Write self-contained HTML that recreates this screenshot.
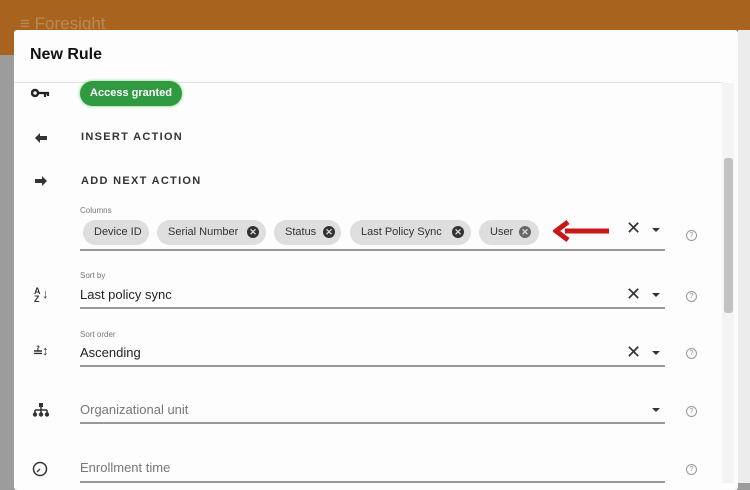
<!DOCTYPE html>
<html><head><style>
*{margin:0;padding:0;box-sizing:border-box}
body{width:750px;height:483px;overflow:hidden;position:relative;background:#9c9c9c;font-family:"Liberation Sans",sans-serif;color:#222}
.top{position:absolute;left:0;top:0;width:750px;height:55px;background:#a8641e}
.top span{position:absolute;left:20px;top:14px;color:#b88a5a;font-size:17px}
.rs{position:absolute;left:738px;top:30px;width:12px;height:453px;background:#ececec}
.dlg{position:absolute;left:14px;top:30px;width:724px;height:460px;background:#fdfdfd;border-radius:3px}
.hd{position:absolute;left:30px;top:46px;font-size:16px;font-weight:bold;color:#111}
.div{position:absolute;left:14px;top:82px;width:709px;height:1px;background:#e2e2e2}
.sb{position:absolute;left:722px;top:83px;width:12px;height:400px;background:#f4f4f4}
.th{position:absolute;left:724px;top:158px;width:9px;height:155px;background:#c2c2c2;border-radius:3px}
.a{position:absolute}
.pill{left:80px;top:81px;width:102px;height:25px;background:#2f9a40;border-radius:13px;color:#fff;font-size:11px;font-weight:bold;text-align:center;line-height:25px;box-shadow:0 0 3px #6c6}
.act{font-size:11px;font-weight:bold;letter-spacing:1.3px;color:#333;left:81px}
.lbl{font-size:8px;color:#777;left:80px}
.val{font-size:13px;color:#222;left:80px}
.ph{font-size:13px;color:#777;left:80px}
.ul{left:80px;width:585px;height:1.5px;background:#999}
.chip{top:220px;height:25px;background:#dedede;border-radius:13px;font-size:11px;color:#333;line-height:25px;padding-left:11px}
.cx{position:absolute;top:6px;width:12px;height:12px;border-radius:50%;background:#333;color:#dedede;font-size:9px;line-height:12px;text-align:center;font-weight:bold}
.help{left:686px;width:11px;height:11px;border:1.3px solid #999;border-radius:50%;font-size:7px;color:#999;text-align:center;line-height:9px}
.x{left:626px;font-size:18px;color:#333}
.car{left:652px;width:0;height:0;border-left:4px solid transparent;border-right:4px solid transparent;border-top:4px solid #333}
</style></head><body>
<div class="top"><span>≡ Foresight</span></div>
<div class="rs"></div>
<div class="dlg"></div>
<div class="hd">New Rule</div>
<div class="div"></div>
<div class="sb"></div><div class="th"></div>

<svg class="a" style="left:31px;top:88px" width="20" height="10"><circle cx="4" cy="5" r="3" fill="none" stroke="#222" stroke-width="2.4"/><path d="M7 5H18M14 5V9M17 5V8" stroke="#222" stroke-width="2.2"/></svg>
<div class="a pill">Access granted</div>
<svg class="a" style="left:34px;top:132px" width="14" height="12"><path d="M1 6L6 1V4H13V8H6V11Z" fill="#333"/></svg>
<div class="a act" style="top:131px">INSERT ACTION</div>
<svg class="a" style="left:34px;top:175px" width="14" height="12"><path d="M13 6L8 1V4H1V8H8V11Z" fill="#333"/></svg>
<div class="a act" style="top:175px">ADD NEXT ACTION</div>

<div class="a lbl" style="top:206px">Columns</div>
<div class="a chip" style="left:83px;width:66px">Device ID</div>
<div class="a chip" style="left:157px;width:109px">Serial Number<span class="cx" style="left:90px">✕</span></div>
<div class="a chip" style="left:274px;width:67px">Status<span class="cx" style="left:49px">✕</span></div>
<div class="a chip" style="left:350px;width:121px">Last Policy Sync<span class="cx" style="left:102px">✕</span></div>
<div class="a chip" style="left:479px;width:60px">User<span class="cx" style="left:40px;background:#666">✕</span></div>
<svg class="a" style="left:553px;top:220px" width="58" height="22"><path d="M56 11H12" stroke="#c81818" stroke-width="5"/><path d="M15 2L3 11L15 20" fill="none" stroke="#c81818" stroke-width="5"/></svg>
<div class="a x" style="top:218px">✕</div><div class="a car" style="top:228px"></div>
<div class="a help" style="top:230px">?</div>
<div class="a ul" style="top:249px"></div>

<div class="a" style="left:34px;top:287px;font-size:9px;font-weight:bold;color:#333;line-height:8px">A<br>Z</div>
<div class="a" style="left:42px;top:286px;font-size:13px;color:#333">↓</div>
<div class="a lbl" style="top:271px">Sort by</div>
<div class="a val" style="top:287px">Last policy sync</div>
<div class="a x" style="top:284px">✕</div><div class="a car" style="top:293px"></div>
<div class="a help" style="top:291px">?</div>
<div class="a ul" style="top:307px"></div>

<div class="a" style="left:33px;top:345px;font-size:12px;font-weight:bold;color:#333">≟</div>
<div class="a" style="left:42px;top:343px;font-size:13px;color:#333">↕</div>
<div class="a lbl" style="top:330px">Sort order</div>
<div class="a val" style="top:345px">Ascending</div>
<div class="a x" style="top:342px">✕</div><div class="a car" style="top:351px"></div>
<div class="a help" style="top:348px">?</div>
<div class="a ul" style="top:365px"></div>

<svg class="a" style="left:32px;top:403px" width="17" height="14"><rect x="7" y="0" width="4" height="4" fill="#333"/><path d="M9 4V7M3 7H15M3 7V10M9 7V10M15 7V10" stroke="#333" stroke-width="1.5" fill="none"/><circle cx="3" cy="11.5" r="2.2" fill="#333"/><circle cx="9" cy="11.5" r="2.2" fill="#333"/><circle cx="15" cy="11.5" r="2.2" fill="#333"/></svg>
<div class="a ph" style="top:402px">Organizational unit</div>
<div class="a car" style="top:408px"></div>
<div class="a help" style="top:406px">?</div>
<div class="a ul" style="top:422px"></div>

<svg class="a" style="left:32px;top:461px" width="16" height="16"><circle cx="8" cy="8" r="6.5" fill="none" stroke="#333" stroke-width="1.5"/><path d="M8 8L5 11" stroke="#333" stroke-width="1.3"/></svg>
<div class="a ph" style="top:460px">Enrollment time</div>
<div class="a help" style="top:464px">?</div>
<div class="a ul" style="top:481px"></div>
</body></html>
